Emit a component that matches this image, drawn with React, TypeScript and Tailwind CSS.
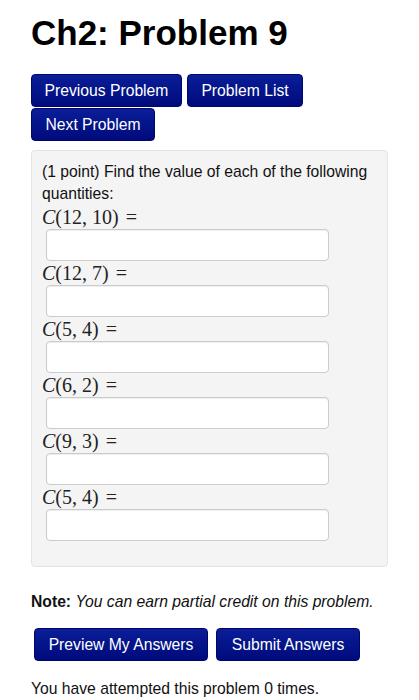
const answers = ['C(12, 10)', 'C(12, 7)', 'C(5, 4)', 'C(6, 2)', 'C(9, 3)', 'C(5, 4)'];

function NavButton({ label, className = '' }: { label: string; className?: string }) {
  return (
    <button
      className={`h-[33px] rounded-[4px] border border-[#00066a] bg-gradient-to-b from-[#0b1d98] to-[#000a7c] text-[15.7px] leading-none text-white ${className}`}
    >
      {label}
    </button>
  );
}

function MathLabel({ expr }: { expr: string }) {
  // italic C, upright arguments, like the TeX rendering
  const rest = expr.slice(1);
  return (
    <div className="h-[24px] text-[20px] leading-[24px] text-[#222]" style={{ fontFamily: '"Liberation Serif", serif' }}>
      <span className="italic">C</span>
      <span>{rest}</span>
      <span className="ml-[7px]">=</span>
    </div>
  );
}

export default function App() {
  return (
    <div className="min-h-[700px] bg-white pl-[31px] text-[#111]" style={{ fontFamily: '"Liberation Sans", Arial, sans-serif' }}>
      <h1 className="pt-[13px] text-[35px] font-bold leading-[40px] text-black">Ch2: Problem 9</h1>

      <div className="mt-[21px] flex flex-col gap-[1px]">
        <div className="flex gap-[5px]">
          <NavButton label="Previous Problem" className="w-[151px]" />
          <NavButton label="Problem List" className="w-[116px]" />
        </div>
        <NavButton label="Next Problem" className="w-[124px]" />
      </div>

      <div className="mt-[9px] w-[357px] rounded-[4px] border border-[#e3e3e3] bg-[#f4f4f4] pb-[25px] pl-[10px] pr-[10px] pt-[10px]">
        <p className="text-[15.7px] leading-[22px]">
          (1 point) Find the value of each of the following quantities:
        </p>
        {answers.map((a, i) => (
          <div key={i}>
            <MathLabel expr={a} />
            <input
              type="text"
              className="ml-[4px] block h-[32px] w-[283px] rounded-[4px] border border-[#cccccc] bg-white shadow-[inset_0_1px_1px_rgba(0,0,0,0.075)] outline-none"
            />
          </div>
        ))}
      </div>

      <p className="mt-[24px] text-[15.7px] leading-[22px]">
        <span className="font-bold">Note:</span> <i>You can earn partial credit on this problem.</i>
      </p>

      <div className="mt-[15px] flex gap-[8px] pl-[3px]">
        <NavButton label="Preview My Answers" className="w-[174px]" />
        <NavButton label="Submit Answers" className="w-[144px]" />
      </div>

      <p className="mt-[17px] text-[15.7px] leading-[22px]">You have attempted this problem 0 times.</p>
    </div>
  );
}
